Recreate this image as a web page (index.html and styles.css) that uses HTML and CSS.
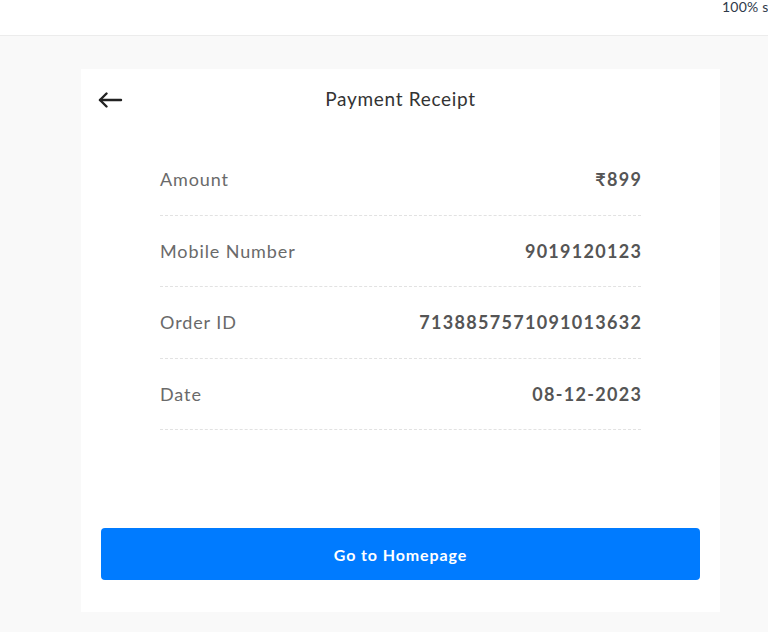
FILE: index.html
```html
<!DOCTYPE html>
<html lang="en">
<head>
<meta charset="utf-8">
<title>Payment Receipt</title>
<link rel="stylesheet" href="styles.css">
</head>
<body>
<div class="topbar"><span class="secure">100% secure</span></div>
<main class="page">
  <section class="card">
    <header class="card-head">
      <button class="back" aria-label="Back">
        <svg width="26" height="16" viewBox="0 0 26 16" fill="none" stroke="#222" stroke-width="2.4" stroke-linecap="round" stroke-linejoin="round">
          <path d="M3 8H24"/>
          <path d="M9.5 1.5L3 8L9.5 14.5"/>
        </svg>
      </button>
      <h1 class="title">Payment Receipt</h1>
    </header>
    <div class="rows">
      <div class="row"><span class="label">Amount</span><span class="value">₹899</span></div>
      <div class="row"><span class="label">Mobile Number</span><span class="value">9019120123</span></div>
      <div class="row"><span class="label">Order ID</span><span class="value">7138857571091013632</span></div>
      <div class="row"><span class="label">Date</span><span class="value">08-12-2023</span></div>
    </div>
    <button class="home-btn">Go to Homepage</button>
  </section>
</main>
</body>
</html>
```
FILE: styles.css
```css
* { box-sizing: border-box; }
html, body { margin: 0; padding: 0; }
body {
  background: #f9f9f9;
  font-family: Lato, "Noto Sans", "DejaVu Sans", sans-serif;
  width: 768px;
  height: 632px;
  overflow: hidden;
}
.topbar {
  height: 36px;
  background: #fff;
  border-bottom: 1px solid #ececec;
  padding-left: 722px;
  white-space: nowrap;
  overflow: hidden;
}
.secure {
  display: block;
  font-size: 14px;
  line-height: 14px;
  letter-spacing: 0.2px;
  color: #2f3a4a;
}
.page {
  padding: 33px 0 0 81px;
}
.card {
  width: 639px;
  height: 543px;
  background: #fff;
  padding: 20px 20px 32px;
  display: flex;
  flex-direction: column;
}
.card-head {
  position: relative;
  height: 22px;
  display: flex;
  align-items: center;
  justify-content: center;
}
.back {
  position: absolute;
  left: -4px;
  top: 3px;
  background: none;
  border: 0;
  padding: 0;
  display: flex;
  cursor: pointer;
}
.title {
  margin: 0;
  font-size: 19px;
  font-weight: 400;
  color: #333;
  letter-spacing: 0.7px;
  line-height: 22px;
  padding-top: 0;
  transform: translateY(-1px);
}
.rows {
  margin: 33px 59px 0;
}
.row {
  height: 71.5px;
  display: flex;
  align-items: center;
  justify-content: space-between;
  border-bottom: 1px dashed #e2e2e2;
  font-size: 18px;
}
.label { color: #6a6a6a; letter-spacing: 0.9px; }
.value { color: #555; font-weight: 700; letter-spacing: 1.3px; margin-right: -1.3px; }
.home-btn {
  margin-top: auto;
  height: 52px;
  width: 100%;
  background: #007bff;
  border: 0;
  border-radius: 4px;
  color: #fff;
  font-family: inherit;
  font-size: 16px;
  font-weight: 700;
  letter-spacing: 0.9px;
  cursor: pointer;
}
```
